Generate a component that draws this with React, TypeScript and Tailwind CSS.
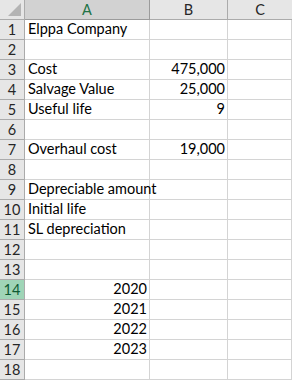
const rows: { a?: string; b?: string; aRight?: boolean }[] = [
  { a: 'Elppa Company' },
  {},
  { a: 'Cost', b: '475,000' },
  { a: 'Salvage Value', b: '25,000' },
  { a: 'Useful life', b: '9' },
  {},
  { a: 'Overhaul cost', b: '19,000' },
  {},
  { a: 'Depreciable amount' },
  { a: 'Initial life' },
  { a: 'SL depreciation' },
  {},
  {},
  { a: '2020', aRight: true },
  { a: '2021', aRight: true },
  { a: '2022', aRight: true },
  { a: '2023', aRight: true },
  {},
];

const cell = 'h-[20px] border-r border-b border-[#d4d4d4] flex items-end pb-[1px] overflow-visible whitespace-nowrap';

export default function App() {
  return (
    <div
      className="w-[292px] h-[383px] overflow-hidden bg-white text-[14.5px] leading-[18px] text-black"
      style={{ fontFamily: 'Lato, "Liberation Sans", sans-serif' }}
    >
      <div className="grid grid-cols-[25px_125px_78px_1fr]">
        <div className="h-[20px] bg-[#e6e6e6] border-r border-b border-[#ababab] relative">
          <div className="absolute right-[3px] bottom-[3px] w-0 h-0 border-l-[13px] border-l-transparent border-b-[13px] border-b-[#b4b4b4]" />
        </div>
        <div className="h-[20px] bg-[#d2d2d2] border-r border-b border-[#9b9b9b] flex items-center justify-center text-[#217346]">
          A
        </div>
        <div className="h-[20px] bg-[#e6e6e6] border-r border-b border-[#ababab] flex items-center justify-center text-[#262626]">
          B
        </div>
        <div className="h-[20px] bg-[#e6e6e6] border-b border-[#ababab] flex items-center justify-center text-[#262626]">
          C
        </div>
        {rows.map((r, i) => {
          const selected = i === 13;
          return (
            <div key={i} className="contents">
              <div
                className={
                  selected
                    ? 'h-[20px] bg-[#9fd5b7] border-r border-b border-[#ababab] flex items-center justify-center text-[#0e5b33]'
                    : 'h-[20px] bg-[#e6e6e6] border-r border-b border-[#ababab] flex items-center justify-center text-[#262626]'
                }
              >
                {i + 1}
              </div>
              <div className={`${cell} ${r.aRight ? 'justify-end pr-[2px]' : 'pl-[3px]'}`}>{r.a}</div>
              <div className={`${cell} justify-end pr-[2px]`}>{r.b}</div>
              <div className={cell} />
            </div>
          );
        })}
      </div>
    </div>
  );
}
